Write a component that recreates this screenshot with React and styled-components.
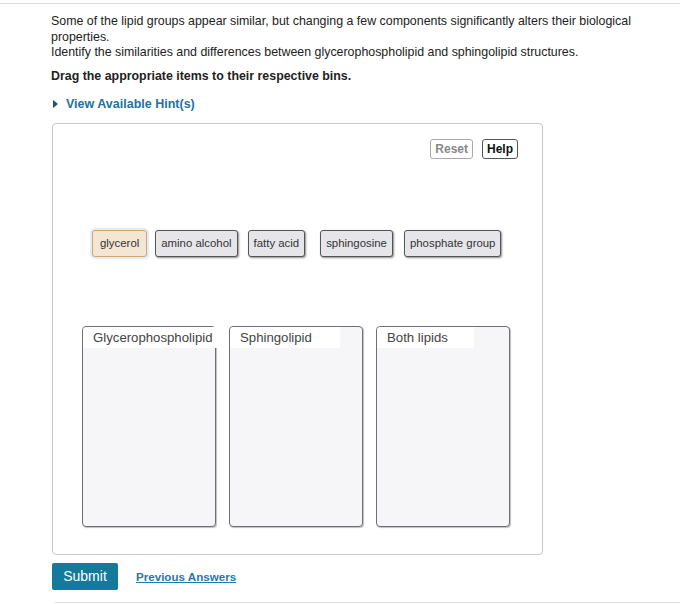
import React from 'react';
import styled, { createGlobalStyle } from 'styled-components';

const GlobalStyle = createGlobalStyle`
  body {
    margin: 0;
    background: #fff;
    font-family: "Liberation Sans", Arial, sans-serif;
    color: #222;
  }
`;

const Page = styled.div`
  width: 700px;
  height: 604px;
  overflow: hidden;
`;

const TopRule = styled.div`
  height: 3px;
  width: 680px;
  border-bottom: 1px solid #ddd;
`;

const Content = styled.div`
  padding: 10px 0 0 51px;
  width: 595px;
`;

const Prompt = styled.p`
  margin: 0;
  font-size: 12.4px;
  line-height: 15.5px;
  color: #222;
`;

const Instruction = styled.p`
  margin: 8px 0 0;
  font-size: 12.4px;
  font-weight: bold;
  color: #222;
`;

const HintToggle = styled.div`
  display: flex;
  align-items: center;
  gap: 8px;
  margin-top: 14px;
  padding-left: 2px;
  font-size: 12.5px;
  font-weight: bold;
  color: #2472a0;
`;

const Caret = styled.span`
  width: 0;
  height: 0;
  border-top: 4.5px solid transparent;
  border-bottom: 4.5px solid transparent;
  border-left: 5px solid #1d4e6e;
`;

const Workspace = styled.div`
  margin: 12px 0 0 1px;
  width: 489px;
  height: 430px;
  border: 1px solid #c8c8cc;
  border-radius: 4px;
  box-sizing: content-box;
  display: flex;
  flex-direction: column;
`;

const Controls = styled.div`
  display: flex;
  justify-content: flex-end;
  gap: 9px;
  padding: 15px 24px 0 0;
`;

const ControlButton = styled.button`
  font-family: inherit;
  font-size: 12px;
  font-weight: bold;
  height: 20px;
  padding: 0 4px;
  background: #fff;
  border: 1px solid ${(p) => (p.$muted ? '#aaa' : '#555')};
  border-radius: 3px;
  color: ${(p) => (p.$muted ? '#888' : '#111')};
`;

const TokenRow = styled.div`
  display: flex;
  margin: 71px 0 0 39px;
`;

const Token = styled.div`
  height: 27px;
  box-sizing: border-box;
  padding: 0 ${(p) => (p.$active ? 7 : 5)}px;
  margin-right: ${(p) => p.$gap}px;
  display: flex;
  align-items: center;
  font-size: 11.4px;
  color: #333;
  background: ${(p) => (p.$active ? '#f3e6d2' : '#e6e6ea')};
  border: 1px solid ${(p) => (p.$active ? '#d2a66a' : '#555')};
  border-radius: 3px;
  box-shadow: ${(p) =>
    p.$active
      ? '0 0 0 2px #e3ecfa, 1px 1px 2px rgba(0,0,0,0.35)'
      : '1px 1px 2px rgba(0,0,0,0.45)'};
`;

const Bins = styled.div`
  display: flex;
  gap: 13px;
  margin: 69px 0 0 29px;
`;

const Bin = styled.div`
  width: 134px;
  height: 201px;
  box-sizing: border-box;
  background: #f6f6f8;
  border: 1px solid #6e6e7a;
  border-radius: 4px;
  box-shadow: 1px 1px 1px rgba(0, 0, 0, 0.25);
`;

const BinLabel = styled.div`
  display: inline-block;
  background: #fff;
  padding: 3px 7px 2px 10px;
  border-top-left-radius: 4px;
  font-size: 13.2px;
  line-height: 16px;
  color: #444;
  min-width: ${(p) => p.$min}px;
`;

const Footer = styled.div`
  display: flex;
  align-items: center;
  gap: 18px;
  margin: 8px 0 0 1px;
`;

const SubmitButton = styled.button`
  font-family: inherit;
  width: 66px;
  height: 27px;
  border: none;
  border-radius: 2px;
  background: #137a9c;
  color: #fff;
  font-size: 14px;
`;

const PrevLink = styled.a`
  font-size: 11.6px;
  font-weight: bold;
  color: #1f7aa8;
  text-decoration: underline;
`;

const BottomRule = styled.div`
  margin: 12px 0 0 55px;
  width: 625px;
  border-top: 1px solid #ddd;
`;

const tokens = [
  { label: 'glycerol', active: true, gap: 8 },
  { label: 'amino alcohol', gap: 10 },
  { label: 'fatty acid', gap: 15 },
  { label: 'sphingosine', gap: 11 },
  { label: 'phosphate group', gap: 0 },
];

const bins = [
  { label: 'Glycerophospholipid', min: 0 },
  { label: 'Sphingolipid', min: 93 },
  { label: 'Both lipids', min: 80 },
];

export default function App() {
  return (
    <Page>
      <GlobalStyle />
      <TopRule />
      <Content>
        <Prompt>
          Some of the lipid groups appear similar, but changing a few components significantly alters their biological
          properties.
        </Prompt>
        <Prompt>Identify the similarities and differences between glycerophospholipid and sphingolipid structures.</Prompt>
        <Instruction>Drag the appropriate items to their respective bins.</Instruction>
        <HintToggle>
          <Caret />
          View Available Hint(s)
        </HintToggle>
        <Workspace>
          <Controls>
            <ControlButton $muted>Reset</ControlButton>
            <ControlButton>Help</ControlButton>
          </Controls>
          <TokenRow>
            {tokens.map((t) => (
              <Token key={t.label} $active={t.active} $gap={t.gap}>
                {t.label}
              </Token>
            ))}
          </TokenRow>
          <Bins>
            {bins.map((b) => (
              <Bin key={b.label}>
                <BinLabel $min={b.min}>{b.label}</BinLabel>
              </Bin>
            ))}
          </Bins>
        </Workspace>
        <Footer>
          <SubmitButton>Submit</SubmitButton>
          <PrevLink href="#">Previous Answers</PrevLink>
        </Footer>
      </Content>
      <BottomRule />
    </Page>
  );
}
